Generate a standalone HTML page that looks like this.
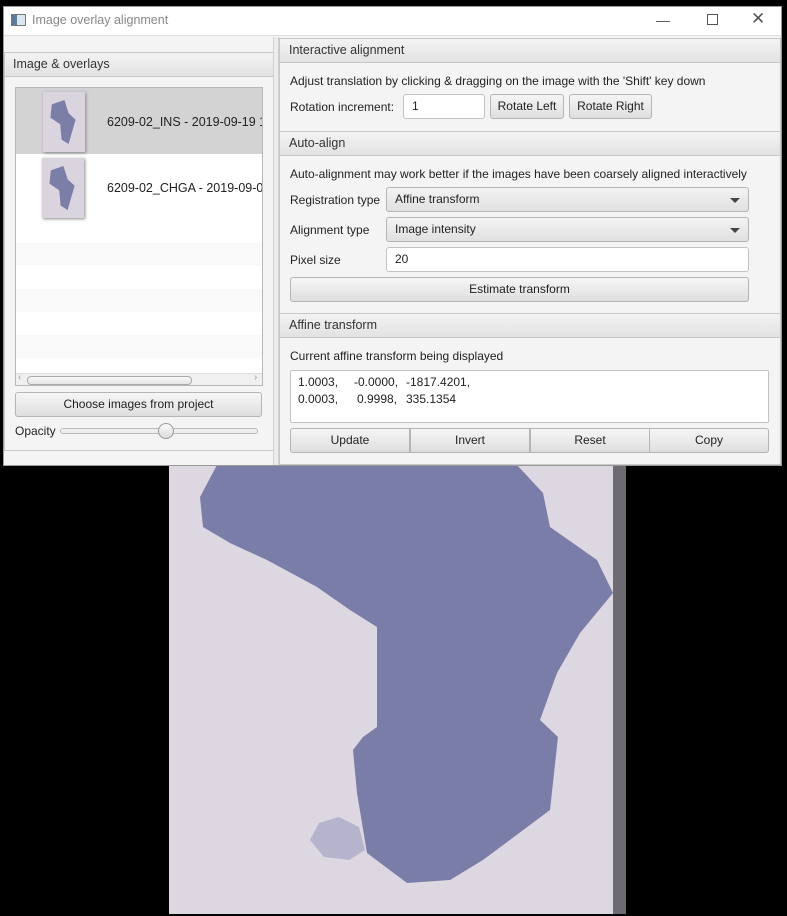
<!DOCTYPE html>
<html><head><meta charset="utf-8"><style>
*{box-sizing:border-box;margin:0;padding:0}
body{width:787px;height:916px;background:#000;position:relative;overflow:hidden;font-family:"Liberation Sans",sans-serif;font-size:12px;color:#222}
.a{position:absolute}
.hdr{position:absolute;background:linear-gradient(#f3f3f3,#e2e2e2);border:1px solid #c8c8c8;padding-left:9px;line-height:22px;font-size:12.5px;color:#333}
.btn{position:absolute;background:linear-gradient(#f6f6f6,#dedede);border:1px solid #b5b5b5;border-radius:3px;text-align:center;line-height:22px;color:#222;font-size:12px}
.inp{position:absolute;background:#fff;border:1px solid #c2c2c2;border-radius:3px;padding-left:8px;line-height:22px}
.cmb{position:absolute;background:linear-gradient(#f3f3f3,#e0e0e0);border:1px solid #b5b5b5;border-radius:3px;padding-left:8px;line-height:22px}
.cmb:after{content:"";position:absolute;right:8px;top:10px;border-left:5px solid transparent;border-right:5px solid transparent;border-top:5px solid #444}
.t{position:absolute;white-space:nowrap;font-size:12px}
.thumb{position:absolute;width:42px;height:60px;background:#d9d4de;box-shadow:1px 1px 3px #888}
.thumb:after{content:"";position:absolute;left:6px;top:8px;width:28px;height:44px;background:#7b7ea6;clip-path:polygon(10% 10%,55% 0,70% 30%,95% 45%,70% 100%,45% 90%,40% 55%,5% 40%)}
</style></head><body>
<!-- tissue image -->
<div class="a" style="left:169px;top:465px;width:444px;height:449px;background:#dcd7e1;overflow:hidden">
<svg width="444" height="449" style="position:absolute;left:0;top:0">
<path d="M48 0 L348 0 L374 28 L381 62 L428 95 L444 128 L411 168 L388 208 L371 255 L389 272 L381 345 L314 395 L281 415 L238 418 L198 388 L188 328 L184 285 L194 272 L208 262 L208 162 L181 145 L148 122 L98 95 L61 78 L34 62 L31 32 Z" fill="#7a7da8"/>
<path d="M141 375 L150 358 L170 352 L190 362 L196 385 L180 395 L155 392 Z" fill="#b6b4cc"/>
</svg></div>
<div class="a" style="left:613px;top:465px;width:13px;height:449px;background:#6e6a72"></div>
<!-- window -->
<div class="a" style="left:3px;top:6px;width:779px;height:460px;background:#f4f4f4;border:1px solid #9a9a9a"></div>
<div class="a" style="left:4px;top:7px;width:777px;height:29px;background:#fff;border-bottom:1px solid #ddd"></div>
<div class="a" style="left:11px;top:14px;width:15px;height:12px;border:1px solid #777;background:linear-gradient(90deg,#5a7c9c 40%,#d8e6f0 40%)"></div>
<div class="t" style="left:32px;top:13px;color:#888;font-size:12.5px">Image overlay alignment</div>
<div class="t" style="left:656px;top:12px;color:#555;font-size:14px">&#8212;</div>
<div class="a" style="left:707px;top:14px;width:11px;height:11px;border:1px solid #555"></div>
<div class="t" style="left:751px;top:9px;color:#555;font-size:17px">&#10005;</div>
<!-- left panel -->
<div class="a" style="left:4px;top:52px;width:270px;height:399px;border:1px solid #c8c8c8;background:#f4f4f4"></div>
<div class="hdr" style="left:4px;top:52px;width:270px;height:25px;padding-left:8px">Image &amp; overlays</div>
<div class="a" style="left:15px;top:87px;width:248px;height:299px;border:1px solid #b8b8b8;background:#fff;overflow:hidden">
<div class="a" style="left:0;top:0;width:248px;height:66px;background:#d3d3d3"></div>
<div class="a" style="left:0;top:155px;width:248px;height:23px;background:#f9f9f9"></div>
<div class="a" style="left:0;top:201px;width:248px;height:23px;background:#f9f9f9"></div>
<div class="a" style="left:0;top:247px;width:248px;height:23px;background:#f9f9f9"></div>
<div class="thumb" style="left:27px;top:4px"></div>
<div class="thumb" style="left:26px;top:70px"></div>
<div class="t" style="left:91px;top:27px;font-size:12.5px">6209-02_INS - 2019-09-19 18</div>
<div class="t" style="left:91px;top:93px;font-size:12.5px">6209-02_CHGA - 2019-09-08</div>
<div class="a" style="left:0;top:285px;width:248px;height:14px;background:#f0f0f0;border-top:1px solid #ddd"></div>
<div class="a" style="left:11px;top:288px;width:165px;height:9px;border:1px solid #aaa;border-radius:4px;background:linear-gradient(#f8f8f8,#e4e4e4)"></div>
<div class="t" style="left:2px;top:284px;color:#999;font-size:10px">&#8249;</div>
<div class="t" style="left:238px;top:284px;color:#999;font-size:10px">&#8250;</div>
</div>
<div class="btn" style="left:15px;top:392px;width:247px;height:25px">Choose images from project</div>
<div class="t" style="left:15px;top:424px">Opacity</div>
<div class="a" style="left:60px;top:428px;width:198px;height:6px;border:1px solid #bbb;border-radius:3px;background:#eee"></div>
<div class="a" style="left:158px;top:423px;width:16px;height:16px;border:1px solid #999;border-radius:50%;background:linear-gradient(#fafafa,#ddd)"></div>
<div class="a" style="left:273px;top:37px;width:6px;height:428px;background:#ececec;border-left:1px solid #d0d0d0;border-right:1px solid #d0d0d0"></div>
<!-- right -->
<div class="a" style="left:279px;top:38px;width:502px;height:427px;border:1px solid #c8c8c8"></div>
<div class="hdr" style="left:279px;top:38px;width:502px;height:25px">Interactive alignment</div>
<div class="t" style="left:290px;top:74px">Adjust translation by clicking &amp; dragging on the image with the 'Shift' key down</div>
<div class="t" style="left:290px;top:100px">Rotation increment:</div>
<div class="inp" style="left:403px;top:94px;width:82px;height:25px">1</div>
<div class="btn" style="left:490px;top:94px;width:74px;height:25px">Rotate Left</div>
<div class="btn" style="left:569px;top:94px;width:83px;height:25px">Rotate Right</div>
<div class="hdr" style="left:279px;top:131px;width:502px;height:25px">Auto-align</div>
<div class="t" style="left:290px;top:167px">Auto-alignment may work better if the images have been coarsely aligned interactively</div>
<div class="t" style="left:290px;top:193px">Registration type</div>
<div class="cmb" style="left:386px;top:187px;width:363px;height:25px">Affine transform</div>
<div class="t" style="left:290px;top:223px">Alignment type</div>
<div class="cmb" style="left:386px;top:217px;width:363px;height:25px">Image intensity</div>
<div class="t" style="left:290px;top:253px">Pixel size</div>
<div class="inp" style="left:386px;top:247px;width:363px;height:25px">20</div>
<div class="btn" style="left:290px;top:277px;width:459px;height:25px">Estimate transform</div>
<div class="hdr" style="left:279px;top:313px;width:502px;height:25px">Affine transform</div>
<div class="t" style="left:290px;top:349px">Current affine transform being displayed</div>
<div class="a" style="left:290px;top:370px;width:479px;height:53px;background:#fff;border:1px solid #c2c2c2;border-radius:2px"></div>
<div class="t" style="left:298px;top:375px">1.0003,</div><div class="t" style="left:354px;top:375px">-0.0000,</div><div class="t" style="left:406px;top:375px">-1817.4201,</div>
<div class="t" style="left:298px;top:392px">0.0003,</div><div class="t" style="left:357px;top:392px">0.9998,</div><div class="t" style="left:406px;top:392px">335.1354</div>
<div class="btn" style="left:290px;top:428px;width:120px;height:25px;border-radius:3px 0 0 3px">Update</div>
<div class="btn" style="left:410px;top:428px;width:120px;height:25px;border-radius:0">Invert</div>
<div class="btn" style="left:530px;top:428px;width:120px;height:25px;border-radius:0">Reset</div>
<div class="btn" style="left:649px;top:428px;width:120px;height:25px;border-radius:0 3px 3px 0">Copy</div>
</body></html>
